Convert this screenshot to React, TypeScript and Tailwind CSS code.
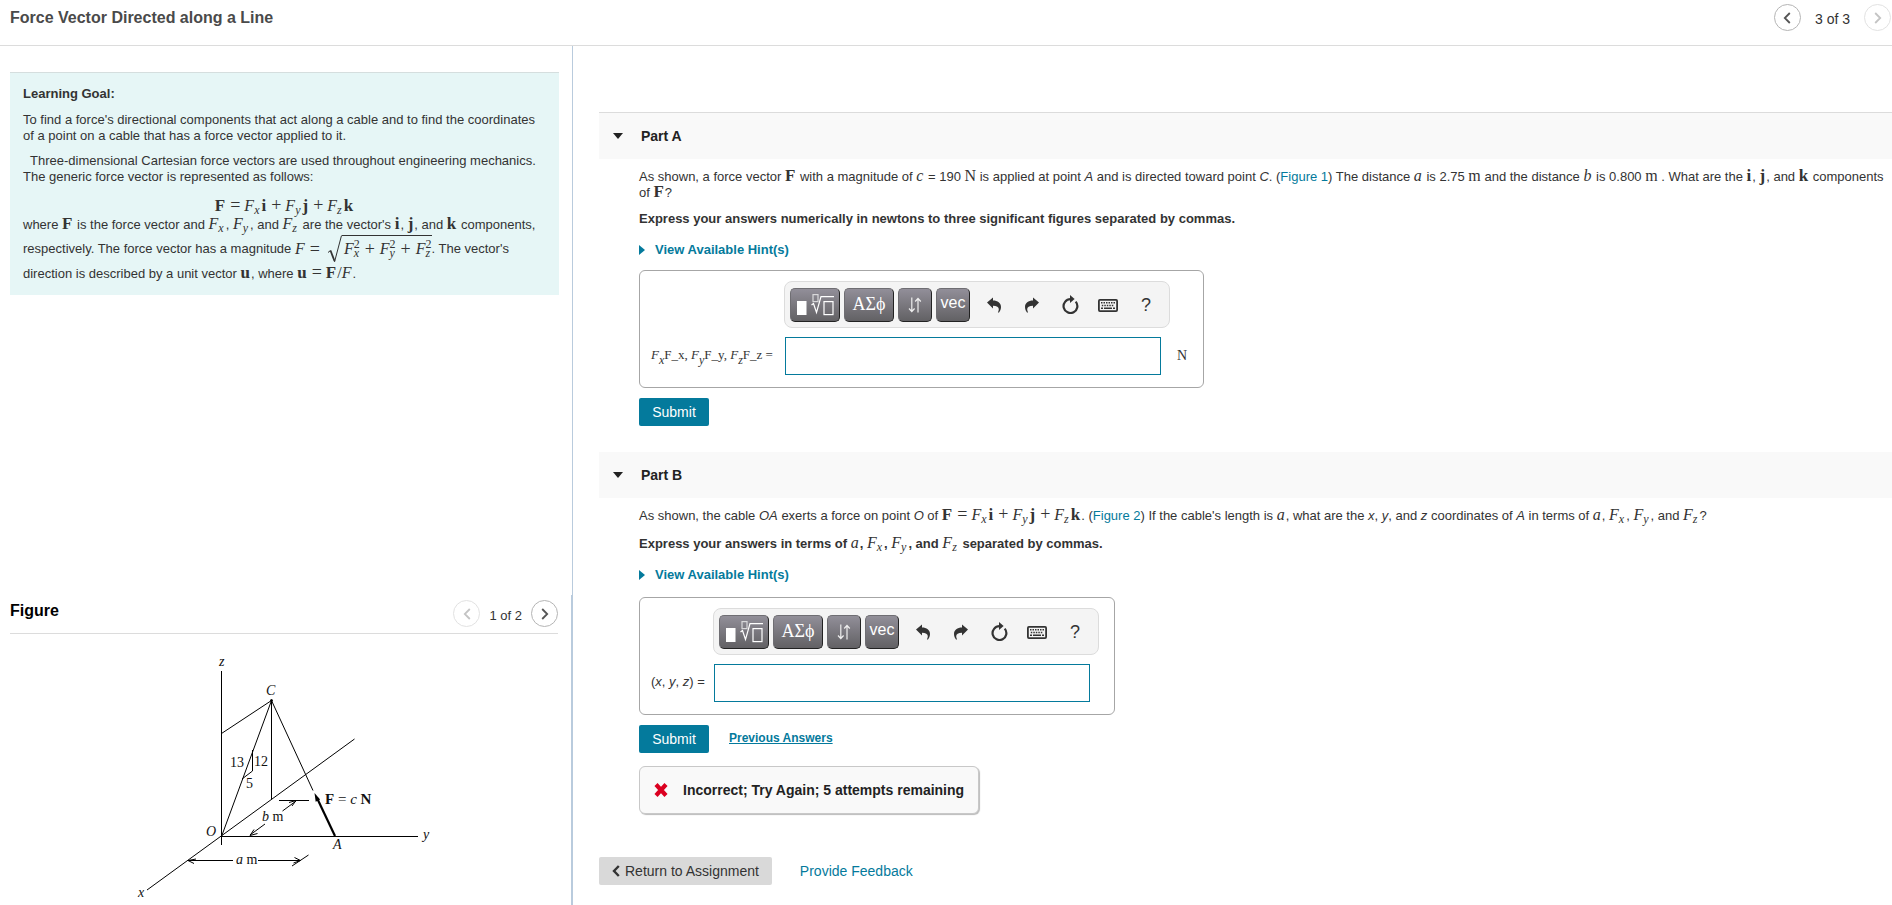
import type { ReactNode } from 'react';

// Upright bold vector symbol
function Vec({ children }: { children: ReactNode }) {
  return <span className="mr-px font-['Liberation_Serif',serif] text-[17px] leading-[0] font-bold">{children}</span>;
}

// Italic scalar
function Var({ children }: { children: ReactNode }) {
  return <span className="mr-px font-['Liberation_Serif',serif] text-base leading-[0] font-normal italic">{children}</span>;
}

// Upright unit
function Unit({ children }: { children: ReactNode }) {
  return <span className="font-['Liberation_Serif',serif] text-base leading-[0]">{children}</span>;
}

function Op({ children }: { children: ReactNode }) {
  return <span className="mx-1 font-['Liberation_Serif',serif] text-lg leading-[0] font-normal">{children}</span>;
}

function Comp({ axis }: { axis: string }) {
  return (
    <span className="mr-0.5 font-['Liberation_Serif',serif] text-base leading-[0] font-normal whitespace-nowrap italic">
      F<span className="align-[-3px] text-xs leading-[0]">{axis}</span>
    </span>
  );
}

function CompSquared({ axis }: { axis: string }) {
  return (
    <span className="inline-flex items-center font-['Liberation_Serif',serif] text-base leading-none italic">
      F
      <span className="flex flex-col text-xs leading-[9px]">
        <span className="not-italic">2</span>
        <span>{axis}</span>
      </span>
    </span>
  );
}

function VectorEquation() {
  return (
    <span className="whitespace-nowrap">
      <Vec>F</Vec>
      <Op>=</Op>
      <Comp axis="x" />
      <Vec>i</Vec>
      <Op>+</Op>
      <Comp axis="y" />
      <Vec>j</Vec>
      <Op>+</Op>
      <Comp axis="z" />
      <Vec>k</Vec>
    </span>
  );
}

function PagerButton({ dir, disabled, label }: { dir: 'left' | 'right'; disabled?: boolean; label: string }) {
  return (
    <button
      type="button"
      aria-label={label}
      disabled={disabled}
      className={
        'flex h-[27px] w-[27px] items-center justify-center rounded-full border bg-white ' +
        (disabled ? 'border-[#e2e2e2] text-[#c4c4c4]' : 'border-[#b5b5b5] text-[#555]')
      }
    >
      <svg width="8" height="12" viewBox="0 0 8 12" fill="none" stroke="currentColor" strokeWidth="1.8">
        <path d={dir === 'left' ? 'M6.8 1 1.8 6l5 5' : 'M1.2 1l5 5-5 5'} />
      </svg>
    </button>
  );
}

function UndoArrow({ flip }: { flip?: boolean }) {
  return (
    <svg width="14" height="16" viewBox="0 0 14 16" fill="currentColor" className={flip ? '-scale-x-100' : ''}>
      <path d="M0 5.6 6 .4v3c4.600 0 8 2.400 8 6.600 0 2.200-.8 4-2 5.400h-1.100c.6-1.300.9-2.200.9-3.200 0-2.200-2-3.400-5.800-3.400v2.600z" />
    </svg>
  );
}

function RefreshArrow() {
  return (
    <svg width="18" height="19" viewBox="0 0 18 19" fill="none" stroke="currentColor" strokeWidth="2.200">
      <path d="M9.500 4.200A6.900 6.900 0 1 0 14.700 6.600" />
      <path d="M9 0l4.600 4.100L9 8z" fill="currentColor" stroke="none" />
    </svg>
  );
}

function KeyboardIcon() {
  return (
    <svg width="20" height="13" viewBox="0 0 20 13" fill="none" stroke="currentColor">
      <rect x="0.9" y="0.9" width="18.200" height="11.200" rx="1" strokeWidth="1.800" />
      <path d="M3 3.800h14" strokeWidth="1.600" strokeDasharray="1.500 1" />
      <path d="M3.800 6.500h12.500" strokeWidth="1.600" strokeDasharray="1.500 1" />
      <path d="M3 9.300h2M6 9.300h8M15 9.300h2" strokeWidth="1.600" />
    </svg>
  );
}

const darkKey =
  'flex h-[34px] items-center justify-center rounded-[5px] border border-[#6f6e73] border-r-[#222] border-b-[#222] bg-linear-to-b from-[#928f99] to-[#626164] text-white';
const flatKey = 'flex h-[34px] w-[38px] items-center justify-center text-[#333]';

function Toolbar() {
  return (
    <div className="flex h-[47px] w-[386px] items-center rounded-lg border border-[#dcdcdc] bg-[#f4f4f4] px-[5px]">
      <div className="flex gap-1">
        <button type="button" aria-label="Templates" className={darkKey + ' w-[50px]'}>
          <svg width="38" height="22" viewBox="0 0 38 22" fill="none" stroke="#fff" strokeWidth="1.200">
            <rect x="1" y="7" width="9.500" height="14" fill="#fff" stroke="none" />
            <path d="M15.500 11l2-1.500 3 9L25 2.600H38" />
            <rect x="17" y=".6" width="5" height="7" stroke="#d8d8da" />
            <rect x="28" y="7.600" width="9" height="13" />
          </svg>
        </button>
        <button type="button" aria-label="Symbols" className={darkKey + " w-[50px] pb-0.5 font-['Liberation_Serif',serif] text-lg leading-none"}>
          ΑΣϕ
        </button>
        <button type="button" aria-label="Subscript and superscript" className={darkKey + ' w-[34px]'}>
          <svg width="14" height="16" viewBox="0 0 14 16" fill="none" stroke="#eee" strokeWidth="1.200">
            <path d="M3.800.5v14M1 11.500l2.800 3 2.800-3M10 15.500v-14M7.200 4.500l2.800-3 2.800 3" />
          </svg>
        </button>
        <button type="button" className={darkKey + ' w-[34px] pb-1 text-base leading-none'}>
          vec
        </button>
      </div>
      <div className="ml-[5px] flex">
        <button type="button" aria-label="Undo" className={flatKey}>
          <UndoArrow />
        </button>
        <button type="button" aria-label="Redo" className={flatKey}>
          <UndoArrow flip />
        </button>
        <button type="button" aria-label="Reset" className={flatKey}>
          <RefreshArrow />
        </button>
        <button type="button" aria-label="Keyboard shortcuts" className={flatKey + ' pt-0.5'}>
          <KeyboardIcon />
        </button>
        <button type="button" aria-label="Help" className={flatKey + ' text-lg leading-none'}>
          ?
        </button>
      </div>
    </div>
  );
}

function AnswerBox({ id, label, labelWidth, unit }: { id: string; label: ReactNode; labelWidth: string; unit?: string }) {
  return (
    <div className="flex h-[118px] w-fit items-start rounded-md border border-[#a6a6a6] pt-[10px] pr-[15px] pl-[11px]">
      <label htmlFor={id} className={'mt-[66px] whitespace-nowrap ' + labelWidth}>
        {label}
      </label>
      <div className="flex flex-col gap-[9px]">
        <Toolbar />
        <input id={id} type="text" className="ml-px h-[38px] w-[376px] border border-[#047a9c] bg-white px-2 outline-none" />
      </div>
      {unit && <span className="mt-[66px] ml-[7px] w-[11px] font-['Liberation_Serif',serif] text-sm leading-[18px]">{unit}</span>}
    </div>
  );
}

function PartHeader({ title }: { title: string }) {
  return (
    <h2>
      <button type="button" aria-expanded="true" className="flex h-[46px] w-full items-center gap-[18px] bg-[#f9f9f9] pl-[14px] text-sm font-bold text-[#222]">
        <svg width="10" height="6" viewBox="0 0 10 6" fill="currentColor">
          <path d="M0 0h10L5 6z" />
        </svg>
        {title}
      </button>
    </h2>
  );
}

function HintLink() {
  return (
    <a href="#hints" className="flex w-fit items-center gap-[10px] font-bold text-[#047a9c]">
      <svg width="6" height="10" viewBox="0 0 6 10" fill="currentColor">
        <path d="M0 0l6 5-6 5z" />
      </svg>
      View Available Hint(s)
    </a>
  );
}

function SubmitButton() {
  return (
    <button type="button" className="h-7 w-[70px] rounded-[2px] bg-[#047a9c] text-sm leading-none text-white">
      Submit
    </button>
  );
}

function LabelComp({ axis }: { axis: string }) {
  return (
    <i>
      F<span className="align-[-5px] text-xs leading-[0]">{axis}</span>
    </i>
  );
}

function ForceDiagram() {
  return (
    <svg width="330" height="265" viewBox="0 0 330 265" className="mx-auto block" fill="none" stroke="#000" strokeWidth="1">
      {/* Axes */}
      <path d="M101.500 31v174M101.500 196.500H298M27 250 234.500 99" />
      {/* Cable plane */}
      <path d="M101.500 93.500 151.500 60.500V159.500M151.500 60.500 101.500 196.500M151.500 60.500 193 150.500" />
      <circle cx="151.500" cy="60.500" r="1" fill="#000" />
      {/* Slope triangle */}
      <path d="M132.500 110v21L122 139" />
      {/* Force arrow */}
      <path d="M215 196 197 158" strokeWidth="2.200" />
      <path d="M194.500 153l5.600 6.400-4.400 2.300z" fill="#000" stroke="none" />
      {/* Dimension b */}
      <path d="M159 160.500h30M162.500 171 176 161M169 162.500l7-2-4 5.500M145 184l-15 11M137.500 193.500l-7.500 2 4-6" />
      {/* Dimension a */}
      <path d="M68 220.500h45M138 220.500h42M76 219l-8 1.500 6 3M172 226l16.500-11M174.500 217.500l6 3-7 2.500" />
      <g fill="#111" stroke="none" fontSize="14" className="font-['Liberation_Serif',serif]">
        <text x="99" y="26" fontStyle="italic">z</text>
        <text x="146" y="55" fontStyle="italic">C</text>
        <text x="86" y="196" fontStyle="italic">O</text>
        <text x="213" y="209" fontStyle="italic">A</text>
        <text x="303" y="199" fontStyle="italic">y</text>
        <text x="18" y="257" fontStyle="italic">x</text>
        <text x="110" y="127">13</text>
        <text x="134" y="126">12</text>
        <text x="126" y="148">5</text>
        <text x="142" y="181"><tspan fontStyle="italic">b</tspan> m</text>
        <text x="116" y="224"><tspan fontStyle="italic">a</tspan> m</text>
        <text x="205" y="164" fontSize="15">
          <tspan fontWeight="bold">F</tspan> = <tspan fontStyle="italic">c</tspan> <tspan fontWeight="bold">N</tspan>
        </text>
      </g>
    </svg>
  );
}

export default function App() {
  return (
    <div className="flex min-h-screen flex-col bg-white font-['Liberation_Sans',Arial,sans-serif] text-[13px] leading-4 text-[#333]">
      <header className="flex h-[46px] items-start justify-between border-b border-[#dcdcdc] pt-1 pr-px pl-[10px]">
        <h1 className="text-base leading-7 font-bold text-[#4a4a4a]">Force Vector Directed along a Line</h1>
        <nav className="flex items-center gap-[14px] text-sm">
          <PagerButton dir="left" label="Previous item" />
          <span className="pt-0.5">3 of 3</span>
          <PagerButton dir="right" label="Next item" disabled />
        </nav>
      </header>

      <main className="flex flex-1">
        <aside className="flex w-[573px] shrink-0 flex-col">
          {/* Problem introduction */}
          <div className="flex-1 border-r border-[#b9cbdd] pt-[26px] pr-[13px] pl-[10px]">
            <section className="border-t border-[#d5dede] bg-[#e6f6f6] px-[13px] pt-[13px] pb-3">
              <h2 className="font-bold">Learning Goal:</h2>
              <p className="mt-[10px]">
                To find a force's directional components that act along a cable and to find the coordinates of a point on a cable that has a force vector applied to it.
              </p>
              <p className="mt-[9px]">
                &nbsp; Three-dimensional Cartesian force vectors are used throughout engineering mechanics. The generic force vector is represented as follows:
              </p>
              <p className="mt-3 text-center leading-5">
                <VectorEquation />
              </p>
              <p>
                where <Vec>F</Vec> is the force vector and <Comp axis="x" />, <Comp axis="y" />, and <Comp axis="z" /> are the vector's <Vec>i</Vec>, <Vec>j</Vec>, and <Vec>k</Vec> components,
              </p>
              <p className="flex h-8 items-center whitespace-pre">
                respectively. The force vector has a magnitude <Var>F</Var>
                <Op>=</Op>
                <span className="ml-1 inline-flex items-stretch">
                  <svg width="14" height="28" viewBox="0 0 14 28" fill="none" stroke="#333">
                    <path d="M0 17.500l2.500-2" strokeWidth="1" />
                    <path d="M2.500 15.500 6.500 26" strokeWidth="1.800" />
                    <path d="M6.500 27 13.500.5" strokeWidth="1" />
                  </svg>
                  <span className="flex items-center gap-px border-t border-[#333] pb-0.5 pl-0.5">
                    <CompSquared axis="x" />
                    <Op>+</Op>
                    <CompSquared axis="y" />
                    <Op>+</Op>
                    <CompSquared axis="z" />
                  </span>
                </span>
                . The vector's
              </p>
              <p className="leading-[18px]">
                direction is described by a unit vector <Vec>u</Vec>, where <Vec>u</Vec>
                <Op>=</Op>
                <Vec>F</Vec>
                <Unit>/</Unit>
                <Var>F</Var>.
              </p>
            </section>
          </div>

          {/* Figure viewer */}
          <section className="border-r-2 border-[#b9cbdd] pr-[13px] pl-[10px]">
            <div className="flex items-start justify-between border-b border-[#dcdcdc] pt-[5px] pb-[6px]">
              <h2 className="text-base leading-[22px] font-bold text-black">Figure</h2>
              <nav className="flex items-center gap-[9px]">
                <PagerButton dir="left" label="Previous figure" disabled />
                <span className="pt-1">1 of 2</span>
                <PagerButton dir="right" label="Next figure" />
              </nav>
            </div>
            <div className="pt-[6px] pl-0.5">
              <ForceDiagram />
            </div>
          </section>
        </aside>

        <div className="min-w-0 flex-1 pt-[66px] pl-[26px]">
          <section className="border-t border-[#dcdcdc]">
            <PartHeader title="Part A" />
            <div className="pt-[10px] pr-1 pl-10">
              <p>
                As shown, a force vector <Vec>F</Vec> with a magnitude of <Var>c</Var> = 190 <Unit>N</Unit> is applied at point <i>A</i> and is directed toward point <i>C</i>. (
                <a href="#figure-1" className="text-[#047a9c]">Figure 1</a>) The distance <Var>a</Var> is 2.75 <Unit>m</Unit> and the distance <Var>b</Var> is 0.800 <Unit>m</Unit> . What are the <Vec>i</Vec>, <Vec>j</Vec>, and <Vec>k</Vec> components of <Vec>F</Vec>?
              </p>
              <p className="mt-[10px] mb-[15px] font-bold">Express your answers numerically in newtons to three significant figures separated by commas.</p>
              <HintLink />
              <div className="mt-[12px] mb-[10px]">
                <AnswerBox
                  id="answer-a"
                  labelWidth="w-[133px]"
                  unit="N"
                  label={
                    <span className="font-['Liberation_Serif',serif] text-[13px]">
                      <LabelComp axis="x" />F_x, <LabelComp axis="y" />F_y, <LabelComp axis="z" />F_z =
                    </span>
                  }
                />
              </div>
              <SubmitButton />
            </div>
          </section>

          <section className="mt-[26px]">
            <PartHeader title="Part B" />
            <div className="pt-[10px] pr-1 pl-10">
              <p>
                As shown, the cable <i>OA</i> exerts a force on point <i>O</i> of <VectorEquation />. (
                <a href="#figure-2" className="text-[#047a9c]">Figure 2</a>) If the cable's length is <Var>a</Var>, what are the <i>x</i>, <i>y</i>, and <i>z</i> coordinates of <i>A</i> in terms of <Var>a</Var>, <Comp axis="x" />, <Comp axis="y" />, and <Comp axis="z" />?
              </p>
              <p className="mt-3 mb-[15px] font-bold">
                Express your answers in terms of <Var>a</Var>, <Comp axis="x" />, <Comp axis="y" />, and <Comp axis="z" /> separated by commas.
              </p>
              <HintLink />
              <div className="mt-[14px] mb-[10px]">
                <AnswerBox
                  id="answer-b"
                  labelWidth="w-[62px]"
                  label={
                    <span>
                      (<i>x</i>, <i>y</i>, <i>z</i>) =
                    </span>
                  }
                />
              </div>
              <div className="flex items-center gap-5">
                <SubmitButton />
                <a href="#previous-answers" className="pb-0.5 text-xs font-bold text-[#047a9c] underline">Previous Answers</a>
              </div>
              <div role="status" className="mt-[13px] flex h-12 w-fit items-center gap-[15px] rounded-md border border-[#c8c8c8] bg-[#f9f9f9] px-[14px] text-sm font-bold text-[#222] shadow-[1px_1px_1px_#bbb]">
                <svg width="14" height="14" viewBox="0 0 14 14" stroke="#db0020" strokeWidth="4.200">
                  <path d="M2 1.500 12 12.500M12 1.500 2 12.500" />
                </svg>
                Incorrect; Try Again; 5 attempts remaining
              </div>
            </div>
          </section>

          <footer className="mt-[43px] flex items-center gap-7 pb-4 text-sm">
            <button type="button" className="flex h-7 items-center gap-[5px] rounded-[2px] bg-[#d9d9d9] px-[13px] text-[#333]">
              <svg width="8" height="12" viewBox="0 0 8 12" fill="none" stroke="#333" strokeWidth="2.400">
                <path d="M6.800 1 2 6l4.800 5" />
              </svg>
              Return to Assignment
            </button>
            <a href="#feedback" className="text-[#047a9c]">Provide Feedback</a>
          </footer>
        </div>
      </main>
    </div>
  );
}
